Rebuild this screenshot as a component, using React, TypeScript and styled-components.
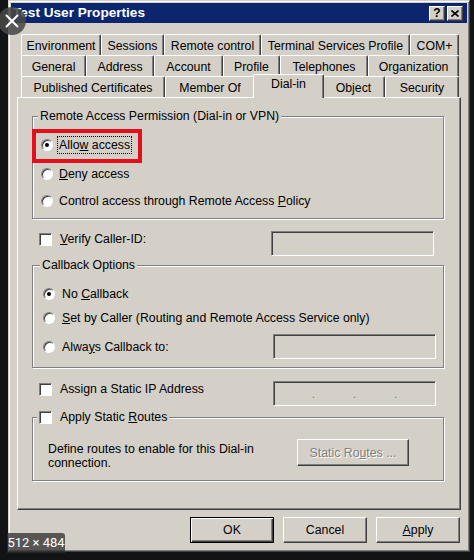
import React from "react";
import styled, { createGlobalStyle, css } from "styled-components";

const FACE = "#d4d0c8";
const FONT = `"Liberation Sans", Arial, sans-serif`;

const Global = createGlobalStyle`
  html, body { margin: 0; padding: 0; background: #121315; }
  body { font-family: ${FONT}; }
  #root { width: 474px; height: 560px; }
`;

const Screen = styled.div`
  position: relative;
  width: 474px;
  height: 560px;
  overflow: hidden;
  background: #121315;
`;

const Window = styled.div`
  box-sizing: border-box;
  margin-left: 8px;
  width: 462px;
  height: 552px;
  background: ${FACE};
  border: 1px solid;
  border-color: ${FACE} #404040 #404040 ${FACE};
  box-shadow: inset 1px 1px #fff, inset -1px -1px #808080;
  padding: 2px;
  display: flex;
  flex-direction: column;
  font-family: ${FONT};
  font-size: 12.3px;
  color: #000;
`;

const TitleBar = styled.div`
  height: 20px;
  background: #0b266e;
  display: flex;
  align-items: center;
  gap: 2px;
  padding: 0 4px 0 2px;
`;

const Title = styled.div`
  flex: 1;
  color: #fff;
  font-weight: bold;
  font-size: 13.6px;
  line-height: 20px;
  white-space: nowrap;
`;

const CaptionButton = styled.div`
  box-sizing: border-box;
  width: 16px;
  height: 15px;
  background: ${FACE};
  border: 1px solid;
  border-color: #fff #404040 #404040 #fff;
  box-shadow: inset -1px -1px #808080;
  display: flex;
  align-items: center;
  justify-content: center;
  font-weight: bold;
  font-size: 12px;
  line-height: 13px;
  color: #000;
`;

const Body = styled.div`
  display: flex;
  flex-direction: column;
  padding: 11px 6px 0 6px;
`;

const TabRow = styled.div`
  display: flex;
  align-items: flex-end;
  height: 21px;
  margin: 0 2px 0 4px;
`;

const Tab = styled.div<{ $w: number; $active?: boolean }>`
  box-sizing: border-box;
  flex: 0 0 ${(p) => p.$w}px;
  height: 21px;
  background: ${FACE};
  border-top: 1px solid #fff;
  border-left: 1px solid #fff;
  border-right: 1px solid #404040;
  box-shadow: inset -1px 0 #808080;
  border-radius: 2px 2px 0 0;
  text-align: center;
  line-height: 22px;
  white-space: nowrap;
  ${(p) =>
    p.$active &&
    css`
      flex-basis: ${p.$w + 4}px;
      height: 24px;
      margin: 0 -2px -1px;
      line-height: 19px;
      position: relative;
      z-index: 1;
    `}
`;

const Panel = styled.div`
  box-sizing: border-box;
  height: 413px;
  border: 1px solid;
  border-color: #fff #404040 #404040 #fff;
  box-shadow: inset -1px -1px #808080;
  padding: 18px 16px 0 14px;
  display: flex;
  flex-direction: column;
`;

const Group = styled.div<{ $mt: number; $pl: number; $pb: number }>`
  margin-top: ${(p) => p.$mt}px;
  border: 1px solid #808080;
  box-shadow: inset 1px 1px #fff, 1px 1px #fff;
  padding: 0 7px ${(p) => p.$pb}px ${(p) => p.$pl}px;
  display: flex;
  flex-direction: column;
`;

const Legend = styled.div<{ $ml: number }>`
  align-self: flex-start;
  display: flex;
  align-items: center;
  height: 16px;
  margin: -9px 0 -1px ${(p) => p.$ml}px;
  padding: 0 2px;
  background: ${FACE};
  line-height: 16px;
  white-space: nowrap;
`;

const Option = styled.div<{ $mt?: number }>`
  position: relative;
  display: flex;
  align-items: center;
  height: 16px;
  margin-top: ${(p) => p.$mt ?? 0}px;
  line-height: 16px;
  white-space: nowrap;
`;

const Radio = styled.span<{ $checked?: boolean }>`
  box-sizing: border-box;
  flex: none;
  width: 12px;
  height: 12px;
  border-radius: 50%;
  background: #fff;
  border: 1px solid;
  border-color: #808080 #fff #fff #808080;
  box-shadow: inset 1px 1px #404040;
  display: flex;
  align-items: center;
  justify-content: center;
  &::after {
    content: "";
    width: 4px;
    height: 4px;
    border-radius: 50%;
    background: ${(p) => (p.$checked ? "#000" : "transparent")};
  }
`;

const Check = styled.span`
  box-sizing: border-box;
  flex: none;
  width: 13px;
  height: 13px;
  background: #fff;
  border: 1px solid;
  border-color: #808080 #fff #fff #808080;
  box-shadow: inset 1px 1px #404040;
`;

const Label = styled.span<{ $ml: number; $focus?: boolean }>`
  margin-left: ${(p) => p.$ml}px;
  ${(p) =>
    p.$focus &&
    css`
      outline: 1px dotted #000;
      outline-offset: 0;
      padding: 0 1px;
      margin-left: ${p.$ml - 1}px;
    `}
`;

const Key = styled.span`
  text-decoration: underline;
  text-underline-offset: 1px;
`;

const Highlight = styled.span`
  position: absolute;
  left: -9px;
  top: -8px;
  width: 110px;
  height: 34px;
  box-sizing: border-box;
  border: 4px solid #e3101c;
  pointer-events: none;
`;

const FieldRow = styled.div<{ $mt: number; $pl: number; $pr: number }>`
  display: flex;
  justify-content: space-between;
  align-items: flex-start;
  margin-top: ${(p) => p.$mt}px;
  padding: 0 ${(p) => p.$pr}px 0 ${(p) => p.$pl}px;
`;

const InnerRow = styled.div<{ $mt: number }>`
  display: flex;
  justify-content: space-between;
  align-items: center;
  margin-top: ${(p) => p.$mt}px;
`;

const Field = styled.div`
  box-sizing: border-box;
  flex: none;
  width: 163px;
  height: 25px;
  background: ${FACE};
  border: 1px solid;
  border-color: #808080 #fff #fff #808080;
  box-shadow: inset 1px 1px #404040;
`;

const IpField = styled(Field)`
  display: flex;
  justify-content: space-evenly;
  align-items: flex-end;
  padding-bottom: 5px;
  color: #808080;
  line-height: 12px;
  font-size: 12px;
`;

const RoutesRow = styled.div`
  display: flex;
  align-items: flex-start;
  margin-top: 15px;
`;

const Note = styled.div`
  flex: 0 0 249px;
  margin-top: 3px;
  line-height: 14px;
`;

const Button = styled.button<{ $w: number; $h: number; $default?: boolean; $disabled?: boolean }>`
  box-sizing: border-box;
  flex: none;
  width: ${(p) => p.$w}px;
  height: ${(p) => p.$h}px;
  padding: 0;
  background: ${FACE};
  font-family: ${FONT};
  font-size: 12.3px;
  color: ${(p) => (p.$disabled ? "#808080" : "#000")};
  text-shadow: ${(p) => (p.$disabled ? "1px 1px #fff" : "none")};
  border: 1px solid;
  border-color: #fff #404040 #404040 #fff;
  box-shadow: inset -1px -1px #808080;
  ${(p) =>
    p.$default &&
    css`
      border-color: #000;
      box-shadow: inset 1px 1px #fff, inset -1px -1px #404040, inset -2px -2px #808080;
    `}
`;

const ButtonBar = styled.div`
  display: flex;
  justify-content: flex-end;
  gap: 9px;
  margin-top: 7px;
  padding-right: 1px;
`;

const CloseBubble = styled.div`
  position: absolute;
  left: -2px;
  top: 7px;
  width: 28px;
  height: 28px;
  border-radius: 50%;
  background: rgba(72, 72, 72, 0.88);
  display: flex;
  align-items: center;
  justify-content: center;
`;

const SizeBadge = styled.div`
  position: absolute;
  left: 7px;
  top: 533px;
  width: 58px;
  height: 20px;
  border-radius: 0 3px 0 0;
  background: rgba(45, 45, 45, 0.75);
  color: #fff;
  font-family: Roboto, "Liberation Sans", sans-serif;
  font-size: 13px;
  line-height: 20px;
  text-align: center;
  white-space: nowrap;
`;

const rows: { label: string; w: number; active?: boolean }[][] = [
  [
    { label: "Environment", w: 80 },
    { label: "Sessions", w: 63 },
    { label: "Remote control", w: 97 },
    { label: "Terminal Services Profile", w: 149 },
    { label: "COM+", w: 49 },
  ],
  [
    { label: "General", w: 65 },
    { label: "Address", w: 68 },
    { label: "Account", w: 69 },
    { label: "Profile", w: 57 },
    { label: "Telephones", w: 88 },
    { label: "Organization", w: 91 },
  ],
  [
    { label: "Published Certificates", w: 144 },
    { label: "Member Of", w: 90 },
    { label: "Dial-in", w: 67, active: true },
    { label: "Object", w: 63 },
    { label: "Security", w: 74 },
  ],
];

export default function App() {
  return (
    <Screen>
      <Global />
      <Window>
        <TitleBar>
          <Title>Test User Properties</Title>
          <CaptionButton>?</CaptionButton>
          <CaptionButton>
            <svg width="8" height="7" viewBox="0 0 8 7">
              <path d="M0.5 0.5 L7.5 6.5 M7.5 0.5 L0.5 6.5" stroke="#000" strokeWidth="1.6" />
            </svg>
          </CaptionButton>
        </TitleBar>
        <Body>
          {rows.map((r, i) => (
            <TabRow key={i}>
              {r.map((t) => (
                <Tab key={t.label} $w={t.w} $active={t.active}>
                  {t.label}
                </Tab>
              ))}
            </TabRow>
          ))}
          <Panel>
            <Group $mt={0} $pl={8} $pb={9}>
              <Legend $ml={-3}>Remote Access Permission (Dial-in or VPN)</Legend>
              <Option $mt={14}>
                <Radio $checked />
                <Label $ml={6} $focus>
                  Allo<Key>w</Key> access
                </Label>
                <Highlight />
              </Option>
              <Option $mt={13}>
                <Radio />
                <Label $ml={6}>
                  <Key>D</Key>eny access
                </Label>
              </Option>
              <Option $mt={11}>
                <Radio />
                <Label $ml={6}>
                  Control access through Remote Access <Key>P</Key>olicy
                </Label>
              </Option>
            </Group>

            <FieldRow $mt={12} $pl={7} $pr={10}>
              <Option>
                <Check />
                <Label $ml={8}>
                  <Key>V</Key>erify Caller-ID:
                </Label>
              </Option>
              <Field />
            </FieldRow>

            <Group $mt={9} $pl={10} $pb={8}>
              <Legend $ml={-3}>Callback Options</Legend>
              <Option $mt={14}>
                <Radio $checked />
                <Label $ml={7}>
                  No <Key>C</Key>allback
                </Label>
              </Option>
              <Option $mt={8}>
                <Radio />
                <Label $ml={7}>
                  <Key>S</Key>et by Caller (Routing and Remote Access Service only)
                </Label>
              </Option>
              <InnerRow $mt={8}>
                <Option>
                  <Radio />
                  <Label $ml={7}>
                    Alwa<Key>y</Key>s Callback to:
                  </Label>
                </Option>
                <Field />
              </InnerRow>
            </Group>

            <FieldRow $mt={13} $pl={7} $pr={8}>
              <Option>
                <Check />
                <Label $ml={8}>Assign a Static IP Address</Label>
              </Option>
              <IpField>
                <span>.</span>
                <span>.</span>
                <span>.</span>
              </IpField>
            </FieldRow>

            <Group $mt={11} $pl={15} $pb={10}>
              <Legend $ml={-11}>
                <Check />
                <Label $ml={8}>
                  Apply Static <Key>R</Key>outes
                </Label>
              </Legend>
              <RoutesRow>
                <Note>
                  Define routes to enable for this Dial-in
                  <br />
                  connection.
                </Note>
                <Button $w={112} $h={27} $disabled>
                  Static Ro<Key>u</Key>tes ...
                </Button>
              </RoutesRow>
            </Group>
          </Panel>
          <ButtonBar>
            <Button $w={84} $h={26} $default>
              OK
            </Button>
            <Button $w={84} $h={26}>
              Cancel
            </Button>
            <Button $w={84} $h={26}>
              <Key>A</Key>pply
            </Button>
          </ButtonBar>
        </Body>
      </Window>
      <CloseBubble>
        <svg width="14" height="14" viewBox="0 0 14 14">
          <path d="M1.5 1.5 L12.5 12.5 M12.5 1.5 L1.5 12.5" stroke="#fff" strokeWidth="2" strokeLinecap="round" />
        </svg>
      </CloseBubble>
      <SizeBadge>512 × 484</SizeBadge>
    </Screen>
  );
}
